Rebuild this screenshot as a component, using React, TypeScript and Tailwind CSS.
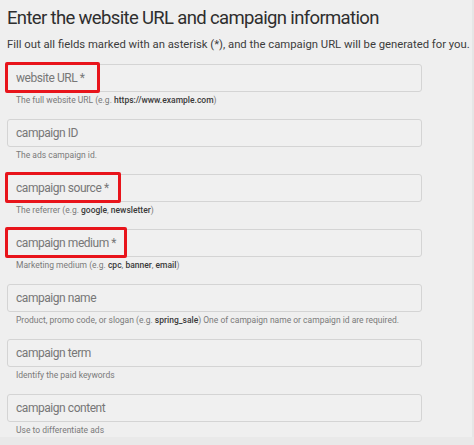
import React from "react";

type Field = {
  label: string;
  help: React.ReactNode;
  red?: number;
};

const B = ({ children }: { children: React.ReactNode }) => (
  <span className="font-medium text-[#3a3a3a]">{children}</span>
);

const fields: Field[] = [
  {
    label: "website URL *",
    help: (
      <>
        The full website URL (e.g. <B>https://www.example.com</B>)
      </>
    ),
    red: 95,
  },
  { label: "campaign ID", help: <>The ads campaign id.</> },
  {
    label: "campaign source *",
    help: (
      <>
        The referrer (e.g. <B>google</B>, <B>newsletter</B>)
      </>
    ),
    red: 116,
  },
  {
    label: "campaign medium *",
    help: (
      <>
        Marketing medium (e.g. <B>cpc</B>, <B>banner</B>, <B>email</B>)
      </>
    ),
    red: 122,
  },
  {
    label: "campaign name",
    help: (
      <>
        Product, promo code, or slogan (e.g. <B>spring_sale</B>) One of campaign name or campaign id are required.
      </>
    ),
  },
  { label: "campaign term", help: <>Identify the paid keywords</> },
  { label: "campaign content", help: <>Use to differentiate ads</> },
];

export default function App() {
  return (
    <div
      className="w-[474px] h-[445px] overflow-hidden bg-[#efefef] relative"
      style={{ fontFamily: "Roboto, 'Liberation Sans', sans-serif" }}
    >
      <div className="absolute right-0 top-0 bottom-0 w-[2px] bg-[#e6e6e6]" />
      <div className="absolute left-0 right-0 bottom-0 h-[8px] bg-[#e9e9e9]" />
      <div className="relative pl-[7px]">
        <h1 className="pt-[6px] text-[18.5px] tracking-[-0.65px] leading-[24px] text-[#2e2e2e] font-normal whitespace-nowrap">
          Enter the website URL and campaign information
        </h1>
        <p className="mt-[7px] text-[11.3px] leading-[16px] text-[#3c3c3c] whitespace-nowrap">
          Fill out all fields marked with an asterisk (*), and the campaign URL will be generated for you.
        </p>
        <div className="mt-[11px] flex flex-col gap-[13px]">
          {fields.map((f) => (
            <div key={f.label} className="flex flex-col">
              <div className="relative w-[415px] h-[28px] border border-[#d4d4d4] rounded-[3px] bg-[#f0f0f0] flex items-center pl-[8px]">
                <span className="text-[12px] tracking-[-0.45px] text-[#777777] whitespace-nowrap">{f.label}</span>
                {f.red ? (
                  <div
                    className="absolute left-[-3px] top-[-3px] h-[31px] border-[3px] border-[#e8141b] rounded-[2px]"
                    style={{ width: f.red }}
                  />
                ) : null}
              </div>
              <div className="mt-[2px] pl-[9px] text-[8.5px] leading-[12px] text-[#7a7a7a] whitespace-nowrap">
                {f.help}
              </div>
            </div>
          ))}
        </div>
      </div>
    </div>
  );
}
